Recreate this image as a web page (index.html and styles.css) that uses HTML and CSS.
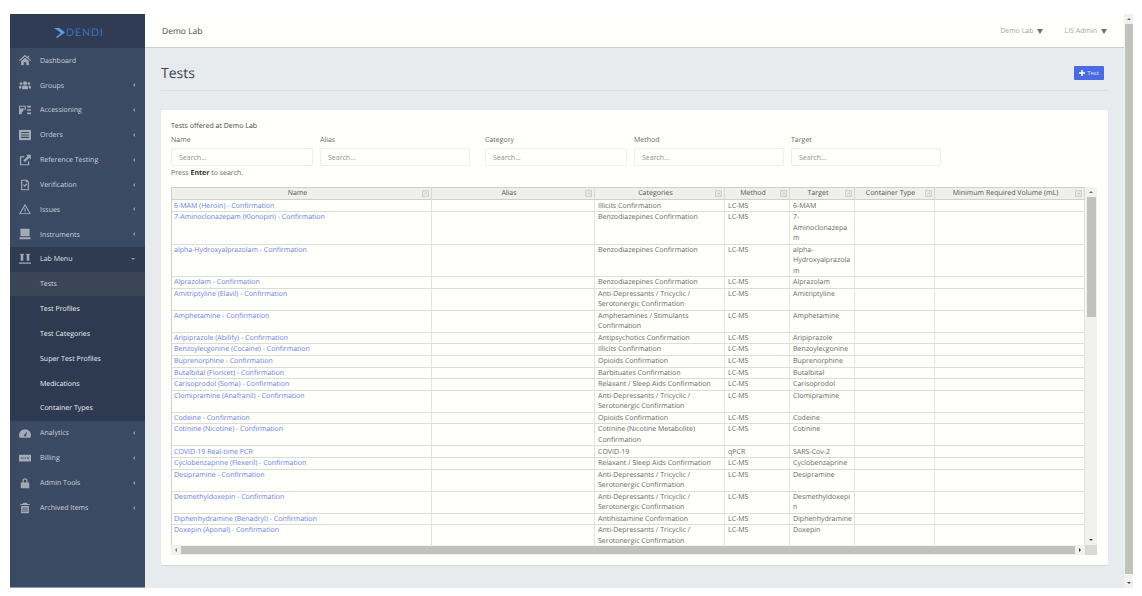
FILE: index.html
```html
<!DOCTYPE html>
<html lang="en">
<head>
<meta charset="utf-8">
<title>Tests</title>
<link rel="stylesheet" href="styles.css">
</head>
<body>
<div class="shell">
  <aside class="sidebar">
    <div class="brand">
      <svg class="brand-mark" viewBox="0 0 11 10" width="11" height="10"><path d="M0 0H5.500L11 4.600 3.500 9.800 1.500 9.800 6.800 5 3.800 2.400Z" fill="#5a9be6"/></svg>
      <span class="brand-name">DENDI</span>
    </div>
    <nav class="menu">
      <a class="item"><svg class="ico" viewBox="0 0 14 12"><path d="M7 0 0 6.200l.8 1L7 2l6.200 5.200.8-1-2.500-2.200V1H10v1.700ZM2.500 7.200 7 3.400l4.500 3.800V12h-3V8.500h-3V12h-3Z"/></svg><span>Dashboard</span></a>
      <a class="item"><svg class="ico" viewBox="0 0 16 11"><circle cx="8" cy="3" r="2.500"/><circle cx="2.800" cy="3.500" r="1.800"/><circle cx="13.200" cy="3.500" r="1.800"/><path d="M4 11V8q0-2 2-2h4q2 0 2 2v3ZM0 10V8q0-2 2-2h1L3 10ZM16 10V8q0-2-2-2h-1v4Z"/></svg><span>Groups</span><i class="caret"></i></a>
      <a class="item"><svg class="ico" viewBox="0 0 14 12"><path fill-rule="evenodd" d="M0 1h8v4.500H5.500L4.500 8H3.500L3 11H0ZM1.200 2.200v2.100h5.600V2.200ZM9.500 1H14v2H9.500ZM9.500 5H14v2H9.500ZM9.500 9H14v2H9.500Z"/></svg><span>Accessioning</span><i class="caret"></i></a>
      <a class="item"><svg class="ico" viewBox="0 0 14 12"><path fill-rule="evenodd" d="M1 0h12a1 1 0 0 1 1 1v10a1 1 0 0 1-1 1H1a1 1 0 0 1-1-1V1a1 1 0 0 1 1-1ZM2.500 2.500v1.300h9V2.500ZM2.500 5.300v1.300h9V5.300ZM2.500 8.100v1.300h9V8.100Z"/></svg><span>Orders</span><i class="caret"></i></a>
      <a class="item"><svg class="ico" viewBox="0 0 14 13"><path d="M8 0h6v6l-2-2-5 5-2-2 5-5ZM1 2h5v1.500H2.500v8h8V8H12v5H1Z"/></svg><span>Reference Testing</span><i class="caret"></i></a>
      <a class="item"><svg class="ico" viewBox="0 0 12 14"><path fill-rule="evenodd" d="M1 0h7l3 3v11H1ZM2.500 1.500v11h7v-9H7v-2ZM3.500 7l1-1 1.200 1.200L8 5l1 1-3.300 3.400Z"/></svg><span>Verification</span><i class="caret"></i></a>
      <a class="item"><svg class="ico" viewBox="0 0 14 12"><path fill-rule="evenodd" d="M7 0l7 12H0ZM7 2.500 2 11h10ZM6.400 5h1.200v3.200H6.400ZM6.400 8.800h1.200V10H6.400Z"/></svg><span>Issues</span><i class="caret"></i></a>
      <a class="item"><svg class="ico" viewBox="0 0 12 12"><path d="M1 0h10v8.500H1ZM0 9.500h12V12H0Z"/></svg><span>Instruments</span><i class="caret"></i></a>
      <a class="item open"><svg class="ico" viewBox="0 0 14 12"><path d="M1 0h5v1H5v7H2V1H1ZM8 0h5v1h-1v7H9V1H8ZM0 10h14v1.500H0Z"/></svg><span>Lab Menu</span><i class="caret down"></i></a>
      <div class="submenu">
        <a class="subitem active">Tests</a>
        <a class="subitem">Test Profiles</a>
        <a class="subitem">Test Categories</a>
        <a class="subitem">Super Test Profiles</a>
        <a class="subitem">Medications</a>
        <a class="subitem">Container Types</a>
      </div>
      <a class="item"><svg class="ico" viewBox="0 0 14 11"><path fill-rule="evenodd" d="M7 1a7 7 0 0 1 7 6.500 6 6 0 0 1-1 3.500H1a6 6 0 0 1-1-3.500A7 7 0 0 1 7 1ZM9.800 3.500 7.300 6.800a1.300 1.300 0 1 0 1.100.6Z"/></svg><span>Analytics</span><i class="caret"></i></a>
      <a class="item"><svg class="ico" viewBox="0 0 16 11"><path fill-rule="evenodd" d="M0 1h16v9H0ZM3 4.500v2h1.500v-2ZM6 4.500v2h1v-2ZM8.500 4.500v2h1v-2ZM11 4.500v2h2v-2Z"/></svg><span>Billing</span><i class="caret"></i></a>
      <a class="item"><svg class="ico" viewBox="0 0 12 13"><path fill-rule="evenodd" d="M3 6V4a3 3 0 0 1 6 0v2h2v7H1V6ZM4.500 6h3V4a1.500 1.500 0 0 0-3 0Z"/></svg><span>Admin Tools</span><i class="caret"></i></a>
      <a class="item"><svg class="ico" viewBox="0 0 12 14"><path fill-rule="evenodd" d="M4 0h4l1 2h3v1.300H0V2h3ZM1 4.500h10V14H1ZM3 6v6h1V6ZM5.500 6v6h1V6ZM8 6v6h1V6Z"/></svg><span>Archived Items</span><i class="caret"></i></a>
    </nav>
  </aside>

  <div class="main">
    <header class="topbar">
      <div class="lab">Demo Lab</div>
      <div class="top-menus">
        <span class="top-menu">Demo Lab <i class="tri"></i></span>
        <span class="top-menu">LIS Admin <i class="tri"></i></span>
      </div>
    </header>
    <div class="content">
      <div class="page-head">
        <h1>Tests</h1>
        <button class="add-btn"><svg viewBox="0 0 8 8" width="6" height="6"><path d="M3 0h2v3h3v2H5v3H3V5H0V3h3Z" fill="#fff"/></svg> Test</button>
      </div>
      <section class="card">
        <div class="card-title">Tests offered at Demo Lab</div>
        <div class="filters">
          <label class="filter f-a">Name<input placeholder="Search..."></label>
          <label class="filter f-b">Alias<input placeholder="Search..."></label>
          <label class="filter f-a">Category<input placeholder="Search..."></label>
          <label class="filter f-c">Method<input placeholder="Search..."></label>
          <label class="filter f-c">Target<input placeholder="Search..."></label>
        </div>
        <div class="hint">Press <b>Enter</b> to search.</div>

        <div class="grid">
          <div class="grid-view">
            <table>
              <colgroup><col class="c1"><col class="c2"><col class="c3"><col class="c4"><col class="c5"><col class="c6"><col class="c7"></colgroup>
              <thead>
                <tr>
                  <th>Name<i class="fbtn"></i></th>
                  <th>Alias<i class="fbtn"></i></th>
                  <th>Categories<i class="fbtn"></i></th>
                  <th>Method<i class="fbtn"></i></th>
                  <th>Target<i class="fbtn"></i></th>
                  <th>Container Type<i class="fbtn"></i></th>
                  <th>Minimum Required Volume (mL)<i class="fbtn"></i></th>
                </tr>
              </thead>
              <tbody>
                <tr><td><a>6-MAM (Heroin) - Confirmation</a></td><td></td><td>Illicits Confirmation</td><td>LC-MS</td><td>6-MAM</td><td></td><td></td></tr>
                <tr><td><a>7-Aminoclonazepam (Klonopin) - Confirmation</a></td><td></td><td>Benzodiazepines Confirmation</td><td>LC-MS</td><td>7-Aminoclonazepam</td><td></td><td></td></tr>
                <tr><td><a>alpha-Hydroxyalprazolam - Confirmation</a></td><td></td><td>Benzodiazepines Confirmation</td><td>LC-MS</td><td>alpha-Hydroxyalprazolam</td><td></td><td></td></tr>
                <tr><td><a>Alprazolam - Confirmation</a></td><td></td><td>Benzodiazepines Confirmation</td><td>LC-MS</td><td>Alprazolam</td><td></td><td></td></tr>
                <tr><td><a>Amitriptyline (Elavil) - Confirmation</a></td><td></td><td>Anti-Depressants / Tricyclic / Serotonergic Confirmation</td><td>LC-MS</td><td>Amitriptyline</td><td></td><td></td></tr>
                <tr><td><a>Amphetamine - Confirmation</a></td><td></td><td>Amphetamines / Stimulants Confirmation</td><td>LC-MS</td><td>Amphetamine</td><td></td><td></td></tr>
                <tr><td><a>Aripiprazole (Abilify) - Confirmation</a></td><td></td><td>Antipsychotics Confirmation</td><td>LC-MS</td><td>Aripiprazole</td><td></td><td></td></tr>
                <tr><td><a>Benzoylecgonine (Cocaine) - Confirmation</a></td><td></td><td>Illicits Confirmation</td><td>LC-MS</td><td>Benzoylecgonine</td><td></td><td></td></tr>
                <tr><td><a>Buprenorphine - Confirmation</a></td><td></td><td>Opioids Confirmation</td><td>LC-MS</td><td>Buprenorphine</td><td></td><td></td></tr>
                <tr><td><a>Butalbital (Fioricet) - Confirmation</a></td><td></td><td>Barbituates Confirmation</td><td>LC-MS</td><td>Butalbital</td><td></td><td></td></tr>
                <tr><td><a>Carisoprodol (Soma) - Confirmation</a></td><td></td><td>Relaxant / Sleep Aids Confirmation</td><td>LC-MS</td><td>Carisoprodol</td><td></td><td></td></tr>
                <tr><td><a>Clomipramine (Anafranil) - Confirmation</a></td><td></td><td>Anti-Depressants / Tricyclic / Serotonergic Confirmation</td><td>LC-MS</td><td>Clomipramine</td><td></td><td></td></tr>
                <tr><td><a>Codeine - Confirmation</a></td><td></td><td>Opioids Confirmation</td><td>LC-MS</td><td>Codeine</td><td></td><td></td></tr>
                <tr><td><a>Cotinine (Nicotine) - Confirmation</a></td><td></td><td>Cotinine (Nicotine Metabolite) Confirmation</td><td>LC-MS</td><td>Cotinine</td><td></td><td></td></tr>
                <tr><td><a>COVID-19 Real-time PCR</a></td><td></td><td>COVID-19</td><td>qPCR</td><td>SARS-Cov-2</td><td></td><td></td></tr>
                <tr><td><a>Cyclobenzaprine (Flexeril) - Confirmation</a></td><td></td><td>Relaxant / Sleep Aids Confirmation</td><td>LC-MS</td><td>Cyclobenzaprine</td><td></td><td></td></tr>
                <tr><td><a>Desipramine - Confirmation</a></td><td></td><td>Anti-Depressants / Tricyclic / Serotonergic Confirmation</td><td>LC-MS</td><td>Desipramine</td><td></td><td></td></tr>
                <tr><td><a>Desmethyldoxepin - Confirmation</a></td><td></td><td>Anti-Depressants / Tricyclic / Serotonergic Confirmation</td><td>LC-MS</td><td>Desmethyldoxepin</td><td></td><td></td></tr>
                <tr><td><a>Diphenhydramine (Benadryl) - Confirmation</a></td><td></td><td>Antihistamine Confirmation</td><td>LC-MS</td><td>Diphenhydramine</td><td></td><td></td></tr>
                <tr><td><a>Doxepin (Aponal) - Confirmation</a></td><td></td><td>Anti-Depressants / Tricyclic / Serotonergic Confirmation</td><td>LC-MS</td><td>Doxepin</td><td></td><td></td></tr>
              </tbody>
            </table>
            <div class="vbar inner"><i class="arr up"></i><div class="thumb"></div><i class="arr dn"></i></div>
          </div>
          <div class="hbar">
            <i class="arr lf"></i><div class="hthumb"></div><i class="arr rt"></i><div class="corner"></div>
          </div>
        </div>
      </section>
    </div>
  </div>
  <div class="vbar page"><i class="arr up"></i><div class="thumb"></div><i class="arr dn"></i></div>
</div>
</body>
</html>
```

FILE: styles.css
```css
* { box-sizing: border-box; }
html, body { margin: 0; height: 100%; background: #fff; overflow: hidden; }
body { padding: 14px 9px 8px 10px; font-family: "Open Sans", "Noto Sans", sans-serif; font-size: 7px; color: #555; text-rendering: geometricPrecision; }
.shell { display: flex; height: 574px; background: #e8ebed; }

.sidebar { width: 135px; flex: none; background: #3b4a63; display: flex; flex-direction: column; box-shadow: inset 0 -1px 0 #8d97a8; }
.brand { height: 34px; flex: none; background: #2f3c54; display: flex; align-items: center; justify-content: center; gap: 1px; padding: 3px 0 0 3px; }
.brand-name { color: #3f6fc4; font-size: 10.500px; letter-spacing: 1px; font-family: "Lato", sans-serif; }
.menu { display: flex; flex-direction: column; }
.item { height: 24.85px; display: flex; align-items: center; color: #cdd2da; position: relative; padding: 1.500px 0 0 30px; }
.item.open { background: #2f3b51; color: #dfe2e7; }
.ico { position: absolute; left: 9px; top: 50%; width: 12px; height: 11px; transform: translateY(-50%); fill: #a3a9b5; }
.caret { position: absolute; right: 10.500px; top: 50%; margin-top: -2px; width: 0; height: 0; border: 2px solid transparent; border-left-width: 0; border-right: 2.200px solid #8f98a8; }
.caret.down { margin-top: -1px; right: 10px; border: 2px solid transparent; border-bottom-width: 0; border-top: 2.200px solid #8f98a8; }
.submenu { background: #2e3a50; display: flex; flex-direction: column; }
.subitem { height: 24.85px; display: flex; align-items: center; padding: 1.500px 0 0 30px; color: #eef0f3; }
.subitem.active { background: #3a4557; color: #d8dbe0; }

.main { flex: 1; min-width: 0; display: flex; flex-direction: column; }
.topbar { height: 34px; flex: none; background: #fffffc; border-bottom: 1px solid #c9ced6; display: flex; align-items: center; justify-content: space-between; padding: 2px 17px 0; }
.lab { font-size: 8.500px; color: #444b55; }
.top-menus { display: flex; gap: 21px; }
.top-menu { color: #a0a3a8; font-size: 7px; display: flex; align-items: center; gap: 4px; }
.tri { width: 0; height: 0; border: 3px solid transparent; border-bottom-width: 0; border-top: 5px solid #6f7178; }

.content { padding: 0 16px; flex: 1; }
.page-head { height: 43px; margin-bottom: 19px; border-bottom: 1px solid #dcdfe2; display: flex; align-items: center; justify-content: space-between; padding: 8px 4px 0 0; }
h1 { margin: 0; font-size: 14px; font-weight: 400; color: #3d4654; }
.add-btn { width: 30px; height: 14px; padding: 0; border: 0; border-radius: 1px; background: #4b6be5; color: #dfe5fb; font: inherit; font-size: 6px; display: flex; align-items: center; justify-content: center; gap: 2px; }

.card { height: 456px; background: #fffffb; border-radius: 2px; border-bottom: 1px solid #d6d9dc; padding: 12px 10px 0; }
.card-title { color: #444; line-height: 10px; height: 9px; }
.filters { display: flex; margin-top: 4.500px; }
.filter { display: flex; flex-direction: column; gap: 2.500px; line-height: 10px; color: #666; }
.f-a { width: 149px; }
.f-b { width: 165px; }
.f-c { width: 157px; }
.filter input { flex: none; width: 142px; height: 18px; border: 1px solid #ebedef; border-radius: 2px; background: #fffffb; padding: 1.500px 7px 0; font: inherit; color: #888; outline: 0; }
.f-b input, .f-c input { width: 150px; }
.filter input::placeholder { color: #8b8f95; opacity: 1; }
.hint { margin-top: 2.500px; line-height: 10px; color: #666; }
.hint b { color: #333; }

.grid { margin-top: 8.500px; width: 926px; }
.grid-view { display: flex; height: 358px; overflow: hidden; }
table { width: 914px; flex: none; table-layout: fixed; border-collapse: separate; border-spacing: 0; border-left: 1px solid #cfcfcd; line-height: 10.450px; align-self: flex-start; }
.c1 { width: 260px; } .c2 { width: 163px; } .c3 { width: 130px; } .c4 { width: 65px; } .c5 { width: 65px; } .c6 { width: 80px; } .c7 { width: 150px; }
th { position: relative; height: 12.300px; padding: 1px 11px 0 3px; font-weight: 400; color: #555; background: #efefec; border-top: 1px solid #cfcfcd; border-right: 1px solid #d9d9d6; }
.fbtn { position: absolute; right: 2px; top: 1.500px; width: 7px; height: 7px; border: 1px solid #d0d0cd; background: #e6e6e3; }
.fbtn::after { content: ""; position: absolute; left: 1.500px; top: 2px; border: 1.200px solid transparent; border-bottom-width: 0; border-top: 1.500px solid #aaa; }
td { padding: 1.150px 1px 0 3px; vertical-align: top; overflow-wrap: anywhere; border-top: 1px solid #dcdcd9; border-right: 1px solid #e2e2df; color: #666; }
td::after { content: ""; display: block; margin-top: -1px; }
tbody tr:first-child td { border-top-color: #cfcfcd; }
td:first-child { padding-left: 2px; }
td a { color: #6a7de6; }

.vbar { display: flex; flex-direction: column; background: #f1f1ee; position: relative; }
.vbar.inner { width: 12px; flex: none; padding: 0 1.500px; }
.vbar.page { width: 9px; flex: none; }
.vbar .thumb { background: #c1c1be; }
.vbar.inner .thumb { margin-top: 10px; height: 120px; }
.vbar.page .thumb { margin-top: 10px; height: 550px; margin-left: 0.500px; width: 8px; }
.arr { position: absolute; width: 0; height: 0; border: 2px solid transparent; }
.arr.up { top: 4px; left: 50%; margin-left: -2px; border-top-width: 0; border-bottom: 2px solid #666; }
.arr.dn { bottom: 4px; left: 50%; margin-left: -2px; border-bottom-width: 0; border-top: 2px solid #444; }
.hbar { position: relative; height: 10px; display: flex; background: #f1f1ee; padding-left: 10px; padding-right: 22px; }
.hthumb { flex: 1; height: 8px; margin-top: 1px; background: #c1c1be; }
.arr.lf { left: 4px; top: 3px; border-left-width: 0; border-right: 2px solid #777; }
.arr.rt { right: 16px; top: 3px; border-right-width: 0; border-left: 2px solid #333; }
.corner { position: absolute; right: 0; top: 0; width: 12px; height: 10px; background: #d9d9d7; }
```
